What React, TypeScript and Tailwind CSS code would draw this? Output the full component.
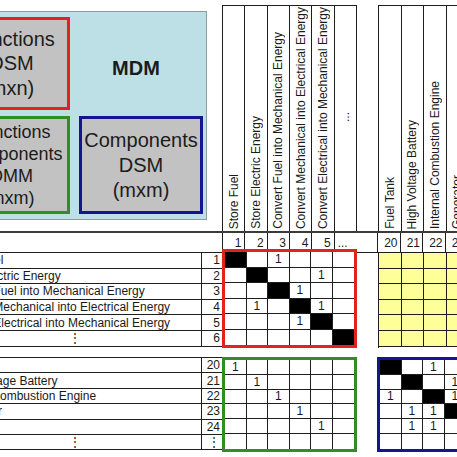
const functionRows = [
  { label: "Store Fuel", no: "1" },
  { label: "Store Electric Energy", no: "2" },
  { label: "Convert Fuel into Mechanical Energy", no: "3" },
  { label: "Convert Mechanical into Electrical Energy", no: "4" },
  { label: "Convert Electrical into Mechanical Energy", no: "5" },
  { label: "⋮", no: "6", dots: true },
];

const componentRows = [
  { label: "Fuel Tank", no: "20" },
  { label: "High Voltage Battery", no: "21" },
  { label: "Internal Combustion Engine", no: "22" },
  { label: "Generator", no: "23" },
  { label: "Motor", no: "24" },
  { label: "⋮", no: "⋮", dots: true },
];

const fnHeads = [
  "Store Fuel",
  "Store Electric Energy",
  "Convert Fuel into Mechanical Energy",
  "Convert Mechanical into Electrical Energy",
  "Convert Electrical into Mechanical Energy",
  "...",
];
const compHeads = [
  "Fuel Tank",
  "High Voltage Battery",
  "Internal Combustion Engine",
  "Generator",
  "Motor",
];

// B = black diagonal cell, 1 = dependency, . = empty
const fnDsm = ["B.1...", ".B..1.", "..B1..", ".1.B1.", "...1B.", ".....B"];
const fnComp = ["1.....", ".1....", "..1...", "...1..", "....1.", "......"];
const compDsm = ["B.1...", ".B.1..", "1.B1..", ".11B..", ".11.B.", ".....B"];

function Matrix({ data, frame, rowH }: { data: string[]; frame: string; rowH: string }) {
  return (
    <div className={`shrink-0 w-[135px] border-[3px] ${frame}`}>
      {data.map((row, r) => (
        <div key={r} className="flex">
          {row.split("").map((c, i) => (
            <div
              key={i}
              className={`w-[21.5px] ${rowH} shrink-0 flex items-center justify-center border-[#1e1e1e] ${
                i < 5 ? "border-r" : ""
              } ${r < 5 ? "border-b" : ""} ${c === "B" ? "bg-black" : "bg-white"}`}
            >
              {c === "1" ? "1" : ""}
            </div>
          ))}
        </div>
      ))}
    </div>
  );
}

function Labels({
  rows,
  rowH,
}: {
  rows: { label: string; no: string; dots?: boolean }[];
  rowH: string;
}) {
  return (
    <div className="shrink-0 w-[278px] border-t border-[#1e1e1e]">
      {rows.map((r) => (
        <div key={r.no + r.label} className={`flex ${rowH} border-b border-[#1e1e1e]`}>
          <div
            className={`w-[257px] pl-[4px] whitespace-nowrap overflow-hidden flex items-center ${
              r.dots ? "justify-center" : ""
            }`}
          >
            {r.label}
          </div>
          <div className="w-[21px] border-l border-[#1e1e1e] flex items-center justify-end pr-[2px]">
            {r.no}
          </div>
        </div>
      ))}
    </div>
  );
}

export default function App() {
  return (
    <div className="w-[457px] h-[457px] overflow-hidden bg-white text-[#1a1a1a] font-['Liberation_Sans',Arial,sans-serif] text-[12px] leading-none">
      <div className="ml-[-56px] flex flex-col w-max">
        {/* header */}
        <div className="flex h-[233px] border-b-2 border-[#3a3a3a]">
          <div className="shrink-0 w-[278px]">
            <div className="ml-[3px] mt-[11px] w-[260px] h-[209px] bg-[#bde0e6] border border-[#8c9c9f] pl-[5px] pt-[5px] grid grid-cols-[117px_124px] grid-rows-[93px_98px] gap-x-[9px] gap-y-[6px] text-[20px] text-[#1c1c1c]">
              <div className="border-[3px] border-[#e4221b] bg-[#c2c2c2] flex flex-col items-center justify-center leading-[24.5px]">
                <span>Functions</span>
                <span>DSM</span>
                <span>(nxn)</span>
              </div>
              <div className="flex items-center justify-center pr-[10px] pt-[9px] font-bold">MDM</div>
              <div className="border-[3px] border-[#2f8f22] bg-[#c2c2c2] flex flex-col items-center justify-center text-[18px] leading-[22px]">
                <span>Functions</span>
                <span>Components</span>
                <span>DMM</span>
                <span>(nxm)</span>
              </div>
              <div className="border-[3px] border-[#151590] bg-[#c2c2c2] flex flex-col items-center justify-center leading-[25px]">
                <span>Components</span>
                <span>DSM</span>
                <span>(mxm)</span>
              </div>
            </div>
          </div>
          <div className="shrink-0 w-[135px] mt-[5px] grid grid-cols-6 border-l border-t border-[#1e1e1e]">
            {fnHeads.map((h) => (
              <div
                key={h}
                className={`border-r border-[#1e1e1e] overflow-hidden flex justify-center pb-[2px] ${
                  h === "..." ? "items-center" : "items-end"
                }`}
              >
                <span className="[writing-mode:vertical-rl] rotate-180 whitespace-nowrap leading-[14px]">{h}</span>
              </div>
            ))}
          </div>
          <div className="shrink-0 w-[21px]" />
          <div className="shrink-0 mt-[5px] flex border-l border-t border-[#1e1e1e]">
            {compHeads.map((h) => (
              <div
                key={h}
                className="w-[22.5px] border-r border-[#1e1e1e] overflow-hidden flex justify-center items-end pb-[2px]"
              >
                <span className="[writing-mode:vertical-rl] rotate-180 whitespace-nowrap leading-[14px]">{h}</span>
              </div>
            ))}
          </div>
        </div>

        {/* column numbers */}
        <div className="flex h-[20px] border-b border-[#1e1e1e]">
          <div className="shrink-0 w-[278px]" />
          <div className="shrink-0 w-[135px] grid grid-cols-6 border-l border-[#1e1e1e]">
            {["1", "2", "3", "4", "5"].map((n) => (
              <div key={n} className="border-r border-[#1e1e1e] flex items-end justify-end pr-[3px] pb-[3px]">
                {n}
              </div>
            ))}
            <div className="flex items-end pl-[3px] pb-[3px]">...</div>
          </div>
          <div className="shrink-0 w-[21px] border-r border-[#1e1e1e]" />
          <div className="shrink-0 flex">
            {["20", "21", "22", "23", "24"].map((n) => (
              <div key={n} className="w-[22.5px] border-r border-[#1e1e1e] flex items-end justify-end pr-[2px] pb-[3px]">
                {n}
              </div>
            ))}
          </div>
        </div>

        {/* functions */}
        <div className="flex">
          <div className="mt-[-1px]">
            <Labels rows={functionRows} rowH="h-[15.6px]" />
          </div>
          <div className="mt-[-4px]">
            <Matrix data={fnDsm} frame="border-[#e4221b]" rowH="h-[15.5px]" />
          </div>
          <div className="shrink-0 w-[21px]" />
          <div className="shrink-0 border-l border-[#1e1e1e]">
            {fnDsm.map((_, r) => (
              <div key={r} className="flex">
                {[0, 1, 2, 3, 4].map((c) => (
                  <div key={c} className="w-[22.5px] h-[15.6px] bg-[#ffff99] border-r border-b border-[#1e1e1e]" />
                ))}
              </div>
            ))}
          </div>
        </div>

        {/* components */}
        <div className="flex mt-[9px]">
          <Labels rows={componentRows} rowH="h-[15.4px]" />
          <Matrix data={fnComp} frame="border-[#2f8f22]" rowH="h-[14.8px]" />
          <div className="shrink-0 w-[20px]" />
          <Matrix data={compDsm} frame="border-[#151590]" rowH="h-[14.8px]" />
        </div>
      </div>
    </div>
  );
}
